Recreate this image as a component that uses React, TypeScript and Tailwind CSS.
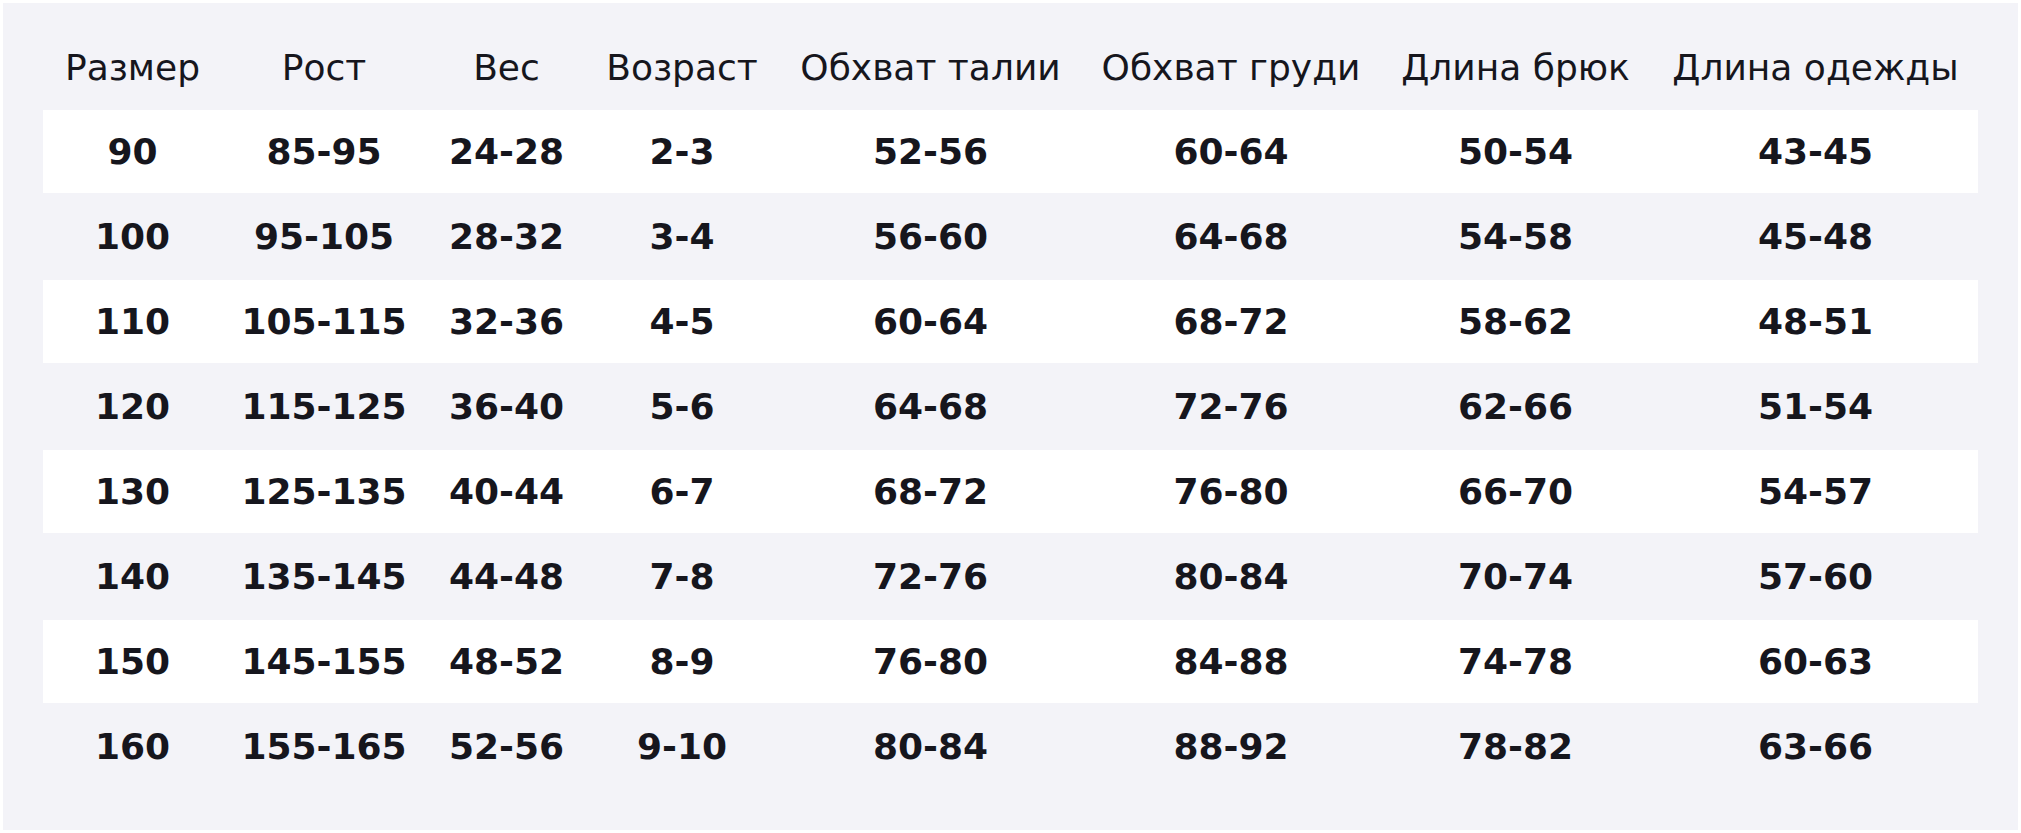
import React from "react";

const headers = ["Размер", "Рост", "Вес", "Возраст", "Обхват талии", "Обхват груди", "Длина брюк", "Длина одежды"];

const rows: string[][] = [
  ["90", "85-95", "24-28", "2-3", "52-56", "60-64", "50-54", "43-45"],
  ["100", "95-105", "28-32", "3-4", "56-60", "64-68", "54-58", "45-48"],
  ["110", "105-115", "32-36", "4-5", "60-64", "68-72", "58-62", "48-51"],
  ["120", "115-125", "36-40", "5-6", "64-68", "72-76", "62-66", "51-54"],
  ["130", "125-135", "40-44", "6-7", "68-72", "76-80", "66-70", "54-57"],
  ["140", "135-145", "44-48", "7-8", "72-76", "80-84", "70-74", "57-60"],
  ["150", "145-155", "48-52", "8-9", "76-80", "84-88", "74-78", "60-63"],
  ["160", "155-165", "52-56", "9-10", "80-84", "88-92", "78-82", "63-66"],
];

const cols = "grid grid-cols-[179px_204px_161px_190px_307px_294px_275px_325px]";

export default function App() {
  return (
    <div className="w-[2021px] h-[833px] bg-white p-[3px] font-['DejaVu_Sans',sans-serif] text-[#16161d]">
      <div className="h-full w-full bg-[#f3f3f8] px-[40px] pt-[40px] pb-[40px] flex flex-col">
        <div className={`${cols} h-[67px] items-start pt-[7px]`}>
          {headers.map((h) => (
            <div key={h} className="text-center text-[36px] leading-[36px] whitespace-nowrap">
              {h}
            </div>
          ))}
        </div>
        {rows.map((r, i) => (
          <div
            key={i}
            className={`${cols} items-center ${i % 2 === 0 ? "bg-white h-[83px]" : "bg-transparent h-[87px]"}`}
          >
            {r.map((c, j) => (
              <div key={j} className="text-center text-[36px] leading-[36px] font-bold whitespace-nowrap">
                {c}
              </div>
            ))}
          </div>
        ))}
      </div>
    </div>
  );
}
